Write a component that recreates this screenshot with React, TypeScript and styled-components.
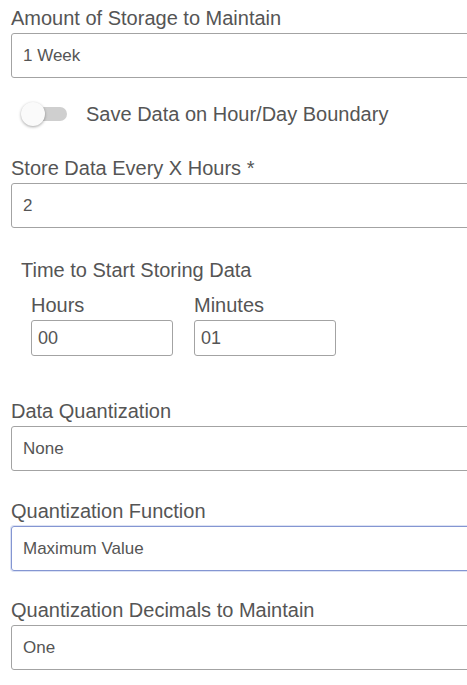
import React from 'react';
import { styled, createGlobalStyle } from 'styled-components';

const GlobalStyle = createGlobalStyle`
    html, body {
        margin: 0;
        padding: 0;
        overflow: hidden;
        background: #ffffff;
    }
    body {
        font-family: "Liberation Sans", Arial, sans-serif;
    }
`

const Page = styled.div`
    width: 467px;
    padding: 7px 0 0 11px;
    box-sizing: border-box;
    display: flex;
    flex-direction: column;
`

const Field = styled.div<{ $gap?: number }>`
    display: flex;
    flex-direction: column;
    margin-top: ${ p => p.$gap ?? 0 }px;
`

const Label = styled.label`
    font-size: 20px;
    line-height: 22px;
    color: #555555;
    margin-bottom: 4px;
`

const Box = styled.div<{ $focused?: boolean }>`
    width: 480px;
    height: 45px;
    box-sizing: border-box;
    border: 1px solid ${ p => p.$focused ? '#8496d2' : '#a3a3a3' };
    box-shadow: ${ p => p.$focused ? '0 0 0 1px rgba(140, 160, 220, 0.3)' : 'none' };
    border-radius: 3px;
    display: flex;
    align-items: center;
    padding-left: 11px;
    font-size: 17px;
    color: #555555;
`

const ToggleRow = styled.div`
    display: flex;
    align-items: center;
    height: 24px;
    margin-top: 24px;
    padding-left: 10px;
`

const Switch = styled.div`
    position: relative;
    width: 46px;
    height: 24px;
    margin-right: 19px;
`

const Track = styled.div`
    position: absolute;
    left: 3px;
    top: 5px;
    width: 43px;
    height: 14px;
    border-radius: 7px;
    background: #cfcfcf;
`

const Knob = styled.div`
    position: absolute;
    left: 0;
    top: 0;
    width: 24px;
    height: 24px;
    border-radius: 50%;
    background: #fafafa;
    box-shadow: 0 1px 3px rgba(0, 0, 0, 0.35);
`

const ToggleText = styled.span`
    font-size: 20px;
    color: #555555;
`

const Group = styled.div`
    display: flex;
    flex-direction: column;
    margin-top: 31px;
    padding-left: 10px;
`

const GroupRow = styled.div`
    display: flex;
    gap: 21px;
    padding-left: 10px;
    margin-top: 9px;
`

const SmallField = styled.div`
    display: flex;
    flex-direction: column;
`

const SmallBox = styled.div`
    width: 142px;
    height: 36px;
    box-sizing: border-box;
    border: 1px solid #a3a3a3;
    border-radius: 3px;
    display: flex;
    align-items: center;
    padding-left: 6px;
    font-size: 18px;
    color: #555555;
`

const App = () => {
    return (
        <>
            <GlobalStyle/>
            <Page>
                <Field>
                    <Label>Amount of Storage to Maintain</Label>
                    <Box>1 Week</Box>
                </Field>
                <ToggleRow>
                    <Switch>
                        <Track/>
                        <Knob/>
                    </Switch>
                    <ToggleText>Save Data on Hour/Day Boundary</ToggleText>
                </ToggleRow>
                <Field $gap={31}>
                    <Label>Store Data Every X Hours *</Label>
                    <Box>2</Box>
                </Field>
                <Group>
                    <Label>Time to Start Storing Data</Label>
                    <GroupRow>
                        <SmallField>
                            <Label>Hours</Label>
                            <SmallBox>00</SmallBox>
                        </SmallField>
                        <SmallField>
                            <Label>Minutes</Label>
                            <SmallBox>01</SmallBox>
                        </SmallField>
                    </GroupRow>
                </Group>
                <Field $gap={44}>
                    <Label>Data Quantization</Label>
                    <Box>None</Box>
                </Field>
                <Field $gap={29}>
                    <Label>Quantization Function</Label>
                    <Box $focused>Maximum Value</Box>
                </Field>
                <Field $gap={28}>
                    <Label>Quantization Decimals to Maintain</Label>
                    <Box>One</Box>
                </Field>
            </Page>
        </>
    );
}

export default App;
